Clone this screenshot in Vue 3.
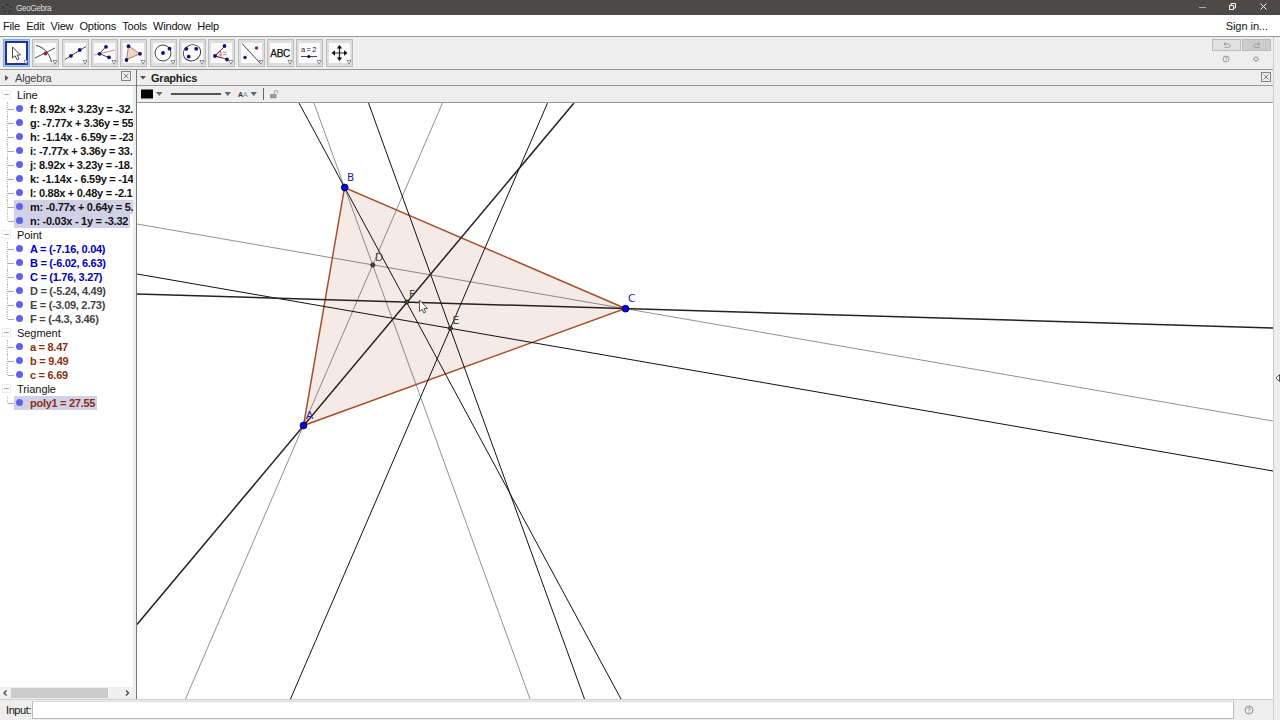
<template>
  <div class="app">
    <div class="titlebar">
      <svg class="logo" width="12" height="12" viewBox="0 0 12 12">
        <ellipse cx="6" cy="6.5" rx="4.5" ry="4" fill="none" stroke="#252538" stroke-width="1" />
        <g fill="#66667c">
          <circle cx="3" cy="3" r=".8" /><circle cx="9" cy="3" r=".8" /><circle cx="10.5" cy="7" r=".8" />
          <circle cx="6" cy="10.5" r=".8" /><circle cx="1.7" cy="8" r=".8" />
        </g>
      </svg>
      <span class="title">GeoGebra</span>
      <svg class="win-buttons" width="80" height="15" viewBox="0 0 80 15" fill="none" stroke="#fff">
        <path d="M-1 7.5H6" stroke="#aaa" />
        <path d="M29.5 5.5h4v4h-4zM31 5V3.5h4.500v4.500H34" />
        <path d="M60.500 3.500l6 6M66.500 3.500l-6 6" />
      </svg>
    </div>

    <div class="menubar">
      <span v-for="m in menus" :key="m" class="menu">{{ m }}</span>
      <span class="signin">Sign in...</span>
    </div>

    <div class="main">
      <div class="content">
        <div class="toolbar">
          <div v-for="(t, i) in tools" :key="t" class="tool" :class="{ active: i === 0 }">
            <svg width="27" height="28" viewBox="0 0 27 28" fill="none" stroke="#333" stroke-width="0.9">
              <rect v-if="i > 0" x="3" y="4" width="21" height="20" fill="#fbfbfb" stroke="none" />
              <path v-if="t === 'move'" d="M9.500 8v11l2.600-2.200 2 4 2-1-2-3.800h3.400z" fill="#fff" />
              <template v-else-if="t === 'point'">
                <path d="M3 19L23 9M4 6.500C11 8 17 13 19.500 23" />
                <circle cx="13.500" cy="14.500" r="1.900" class="red" />
              </template>
              <template v-else-if="t === 'line'">
                <path d="M3 20.500L24 7.500" />
                <circle cx="9" cy="16.800" r="1.900" class="blue" /><circle cx="17.800" cy="11" r="1.900" class="blue" />
              </template>
              <template v-else-if="t === 'bisector'">
                <path d="M15 7.500L8.500 14.800L18 18.500" />
                <path d="M3 16L24 11" stroke="#e77" />
                <circle cx="15" cy="7.800" r="1.900" class="blue" /><circle cx="8.500" cy="14.800" r="1.900" class="blue" />
                <circle cx="18" cy="18.300" r="1.900" class="blue" />
              </template>
              <template v-else-if="t === 'polygon'">
                <path d="M8.500 7L20 14.800L6.500 20.500z" fill="#eed5ca" stroke="#a87060" />
                <circle cx="8.500" cy="7.200" r="1.900" class="blue" /><circle cx="20" cy="14.800" r="1.900" class="blue" />
                <circle cx="6.500" cy="21" r="1.900" class="blue" />
              </template>
              <template v-else-if="t === 'circle'">
                <circle cx="13" cy="14" r="8" />
                <circle cx="13" cy="14" r="1.900" class="blue" /><circle cx="19.500" cy="9.700" r="1.900" class="blue" />
              </template>
              <template v-else-if="t === 'conic'">
                <ellipse cx="13" cy="13.800" rx="9" ry="7.800" transform="rotate(-30 13 13.800)" />
                <circle cx="7.300" cy="9.800" r="1.900" class="blue" /><circle cx="17.200" cy="9.800" r="1.900" class="blue" />
                <circle cx="9.700" cy="17.700" r="1.900" class="blue" />
              </template>
              <template v-else-if="t === 'angle'">
                <path d="M11.500 11.500L7 17l6 2c1-2 1-5-1.500-7.500z" fill="#fbd8d4" stroke="#e99" />
                <path d="M17 7L7 17l13 3.500" />
                <path d="M12.500 12v5M15 13.200h3.500M15 15.500h3.500" stroke="#e66" />
                <circle cx="16.500" cy="7" r="1.900" class="blue" /><circle cx="7" cy="17" r="1.900" class="blue" />
                <circle cx="19" cy="20.500" r="1.900" class="blue" />
              </template>
              <template v-else-if="t === 'reflect'">
                <path d="M4 4.500L22 24" />
                <circle cx="7" cy="18.500" r="1.700" class="blue" /><circle cx="18.500" cy="9" r="1.700" class="red" />
              </template>
              <text v-else-if="t === 'text'" x="3.300" y="17.500" textLength="20" class="abc">ABC</text>
              <template v-else-if="t === 'slider'">
                <text x="5" y="13.300" textLength="15.500" class="slider-label">a = 2</text>
                <path d="M5 17.500H21" />
                <circle cx="12.800" cy="17.500" r="1.500" fill="#111" stroke="none" />
              </template>
              <template v-else>
                <path d="M7 14H20M13.500 7.500V20.500" stroke="#222" stroke-width="1.200" />
                <path d="M5.500 14l3.500-2.700v5.400zM21.500 14l-3.500-2.700v5.400zM13.500 6l-2.700 3.500h5.400zM13.500 22l-2.700-3.500h5.400z" fill="#111" stroke="none" />
              </template>
              <path d="M21 21.500h4l-2 3.700z" fill="#fff" stroke="#777" stroke-width="0.800" />
            </svg>
          </div>
          <div class="tool-right">
            <div class="undo"><svg width="10" height="9" viewBox="0 0 10 9"><path d="M2.500 6.500H6c3 0 3-3.500 0-3.500H2M4 1L2 3l2 2" /></svg></div>
            <div class="undo redo"><svg width="10" height="9" viewBox="0 0 10 9"><path d="M7.500 6.500H4c-3 0-3-3.500 0-3.500H8M6 1l2 2-2 2" /></svg></div>
            <div class="small-icon">
              <svg width="8" height="8" viewBox="0 0 8 8"><circle cx="4" cy="4" r="3" /><path d="M3 3c0-1.400 2.200-1.400 2 0L4 4.200V5M4 5.500V6.200" /></svg>
            </div>
            <div class="small-icon">
              <svg width="8" height="8" viewBox="0 0 8 8"><circle cx="4" cy="4" r="1.900" stroke-width="1.300" /><path d="M4 .800V2M4 6V7.200M.800 4H2M6 4H7.200M1.700 1.700l.8.800M6.300 6.300l-.8-.8M6.300 1.700l-.8.800M1.700 6.300l.8-.8" /></svg>
            </div>
          </div>
        </div>

        <div class="views">
          <div class="algebra">
            <div class="view-header">
              <svg width="7" height="8" viewBox="0 0 7 8"><path d="M2 1l3.500 3L2 7z" fill="#555" /></svg>
              <span class="view-name">Algebra</span>
              <svg class="close" width="10" height="10" viewBox="0 0 10 10"><rect x=".5" y=".5" width="9" height="9" /><path d="M2.500 2.500l5 5M7.500 2.500l-5 5" /></svg>
            </div>
            <div class="tree">
              <template v-for="g in groups" :key="g.name">
                <div class="group"><span class="minus"></span>{{ g.name }}</div>
                <div v-for="(item, i) in g.items" :key="item" class="item" :class="[g.cls, { last: i === g.items.length - 1 }]">
                  <span class="branch"></span>
                  <span class="entry" :class="{ selected: isSelected(item), free: isFree(item) }">
                    <i class="dot"></i><b>{{ item }}</b>
                  </span>
                </div>
              </template>
            </div>
            <div class="scrollbar">
              <svg width="11" height="12" viewBox="0 0 11 12"><path d="M6.500 3.500L4 6l2.500 2.500" /></svg>
              <span class="thumb"></span>
              <svg width="11" height="12" viewBox="0 0 11 12"><path d="M4 3.500L6.500 6 4 8.500" /></svg>
            </div>
          </div>

          <div class="graphics">
            <div class="view-header">
              <svg width="8" height="8" viewBox="0 0 8 8"><path d="M1 2h6L4 5.500z" fill="#555" /></svg>
              <span class="view-name bold">Graphics</span>
              <svg class="close" width="10" height="10" viewBox="0 0 10 10"><rect x=".5" y=".5" width="9" height="9" /><path d="M2.500 2.500l5 5M7.500 2.500l-5 5" /></svg>
            </div>
            <div class="stylebar">
              <svg width="150" height="16" viewBox="137 86 150 16">
                <rect x="141" y="89.500" width="12" height="9" fill="#000" />
                <path d="M156 92h6.500l-3.250 4zM224.500 92h6.500l-3.250 4zM250.500 92h6.500l-3.250 4z" fill="#666" />
                <path d="M171 94H221" stroke="#222" stroke-width="1.700" />
                <text x="238" y="97" font-size="7" font-weight="bold" fill="#333">A</text>
                <text x="243" y="97" font-size="7" fill="#888">A</text>
                <path d="M263.500 88V100" stroke="#666" />
                <rect x="270" y="94" width="6.500" height="4.300" fill="#999" />
                <path d="M274.500 94v-2c0-2 3.300-2 3.300 0v1.500" fill="none" stroke="#aaa" stroke-width="1.100" />
              </svg>
            </div>
            <svg class="canvas" width="1136" height="596" viewBox="137 103 1136 596">
              <polygon points="303.500,425.500 344.500,187.500 625.500,308.500" fill="#993300" fill-opacity="0.1" stroke="#a8502b" stroke-width="1.500" />
              <line v-for="(l, i) in lines" :key="i" :x1="l[0]" :y1="l[1]" :x2="l[2]" :y2="l[3]" :class="l[4]" />
              <g v-for="p in points" :key="p.name" :class="p.free ? 'free-point' : 'dep-point'">
                <circle :cx="p.x" :cy="p.y" :r="p.free ? 3.400 : 2.100" />
                <text :x="p.lx" :y="p.ly">{{ p.name }}</text>
              </g>
              <path d="M419.500 300v11.500l2.600-2.300 1.800 3.800 1.800-.9-1.800-3.600h3.600z" fill="#fff" stroke="#444" stroke-width="0.900" />
            </svg>
          </div>
        </div>

        <div class="inputbar">
          <span class="input-label">Input:</span>
          <div class="input-field"></div>
          <svg class="help" width="10" height="10" viewBox="0 0 10 10" fill="none" stroke="#888" stroke-width=".9"><circle cx="5" cy="5" r="4" /><path d="M3.700 4c0-2 2.800-1.700 2.600 0L5 5.300V6M5 6.800V7.700" /></svg>
        </div>
      </div>

      <div class="side">
        <svg width="7" height="10" viewBox="0 0 7 10"><path d="M5.500 1.500v7L2 5z" fill="#fff" stroke="#555" /></svg>
      </div>
    </div>
  </div>
</template>

<script setup>
const menus = ['File', 'Edit', 'View', 'Options', 'Tools', 'Window', 'Help']

const tools = ['move', 'point', 'line', 'bisector', 'polygon', 'circle', 'conic', 'angle', 'reflect', 'text', 'slider', 'pan']

const groups = [
  {
    name: 'Line',
    cls: 'line-item',
    items: [
      'f: 8.92x + 3.23y = -32.',
      'g: -7.77x + 3.36y = 55',
      'h: -1.14x - 6.59y = -23',
      'i: -7.77x + 3.36y = 33.',
      'j: 8.92x + 3.23y = -18.',
      'k: -1.14x - 6.59y = -14',
      'l: 0.88x + 0.48y = -2.1',
      'm: -0.77x + 0.64y = 5.',
      'n: -0.03x - 1y = -3.32'
    ]
  },
  {
    name: 'Point',
    cls: 'point-item',
    items: ['A = (-7.16, 0.04)', 'B = (-6.02, 6.63)', 'C = (1.76, 3.27)', 'D = (-5.24, 4.49)', 'E = (-3.09, 2.73)', 'F = (-4.3, 3.46)']
  },
  { name: 'Segment', cls: 'segment-item', items: ['a = 8.47', 'b = 9.49', 'c = 6.69'] },
  { name: 'Triangle', cls: 'segment-item', items: ['poly1 = 27.55'] }
]

const selected = ['m', 'n', 'p']
const isSelected = (item) => selected.includes(item[0])
const isFree = (item) => 'ABC'.includes(item[0])

// x1, y1, x2, y2, style
const lines = [
  [442.500, 103, 185.500, 699, 'thin'],
  [314, 103, 530, 699, 'thin'],
  [137, 224, 1273, 421, 'thin'],
  [368.500, 103, 584.500, 699, 'normal'],
  [547.500, 103, 290.500, 699, 'normal'],
  [137, 274, 1273, 471, 'normal'],
  [299, 103, 621, 699, 'normal'],
  [574, 103, 137, 624.500, 'thick'],
  [137, 294, 1273, 328, 'thick']
]

const points = [
  { name: 'A', x: 303.5, y: 425.5, lx: 306, ly: 419, free: true },
  { name: 'B', x: 344.7, y: 187.5, lx: 347, ly: 181, free: true },
  { name: 'C', x: 625.5, y: 308.7, lx: 628, ly: 302, free: true },
  { name: 'D', x: 372.8, y: 265, lx: 375, ly: 261 },
  { name: 'E', x: 450.4, y: 328.3, lx: 452.5, ly: 324 },
  { name: 'F', x: 406.7, y: 302, lx: 409, ly: 298 }
]
</script>

<style>
body { margin: 0; overflow: hidden; }
</style>

<style scoped>
.app {
  width: 1280px;
  height: 720px;
  display: flex;
  flex-direction: column;
  font-family: "Liberation Sans", Arial, sans-serif;
  font-size: 11px;
  color: #222;
  background: #eee;
  overflow: hidden;
}
svg { display: block; flex: none; }
.app * { box-sizing: border-box; }
.titlebar {
  height: 15px;
  flex: none;
  display: flex;
  align-items: center;
  background: #4b4a48;
  color: #ddd;
}
.logo { margin-left: 1px; }
.title { margin-left: 3px; font-size: 8.3px; letter-spacing: -0.45px; line-height: 15px; padding-top: 1px; }
.win-buttons { margin-left: auto; overflow: visible; }
.menubar {
  height: 22px;
  flex: none;
  display: flex;
  align-items: center;
  background: #fff;
  border-bottom: 1px solid #999;
  padding: 1px 12px 0 3px;
  color: #111;
}
.menu { margin-right: 6.2px; letter-spacing: -0.2px; }
.signin { margin-left: auto; letter-spacing: -0.05px; }
.main { flex: 1; display: flex; min-height: 0; }
.content { width: 1273px; display: flex; flex-direction: column; }
.toolbar {
  height: 33px;
  flex: none;
  display: flex;
  gap: 2.35px;
  padding: 2px 2px 0 3px;
  border-bottom: 1px solid #999;
}
.tool { width: 27px; height: 28px; background: #dedede; box-shadow: inset 0 0 0 1px #bbb; }
.tool.active { background: #fff; box-shadow: inset 0 0 0 1px #7aaede, inset 0 0 0 2px #a5c5ea, inset 0 0 0 4px #26309a; }
.blue { fill: #101078; stroke: none; }
.red { fill: #9b2032; stroke: none; }
.abc { font-size: 10px; fill: #111; stroke: #111; stroke-width: 0.25; }
.slider-label { font-size: 7.500px; fill: #222; stroke: none; }
.tool-right {
  margin-left: auto;
  width: 59px;
  display: grid;
  grid-template-columns: 29px 29px;
  grid-template-rows: 12px 14px;
  gap: 0 1px;
}
.tool-right path, .tool-right circle { fill: none; stroke: #999; stroke-width: 0.9; }
.undo { border: 1px solid #bbb; background: #e2e2e2; display: flex; align-items: center; justify-content: center; }
.redo { background: #ccc; }
.small-icon { display: flex; align-items: center; justify-content: center; padding: 2px 2px 0 0; }
.views { flex: 1; display: flex; min-height: 0; }
.algebra { width: 136px; padding-right: 3px; display: flex; flex-direction: column; }
.algebra .view-header { margin-right: -3px; padding-right: 5px; }
.graphics { flex: 1; border-left: 1px solid #777; display: flex; flex-direction: column; }
.view-header {
  height: 16px;
  flex: none;
  display: flex;
  align-items: center;
  padding: 0 4px 0 3px;
  border-bottom: 1px solid #999;
  color: #444;
}
.graphics .view-header { padding: 0 2px 0 2px; }
.view-name { margin-left: 5px; padding-top: 1px; letter-spacing: -0.2px; }
.view-name.bold { font-weight: bold; color: #222; margin-left: 4px; }
.close { margin-left: auto; margin-bottom: 3px; fill: none; stroke: #777; stroke-width: 0.9; }
.graphics .close { margin-bottom: 2px; }
.tree { flex: 1; background: #fff; padding-top: 2px; overflow: hidden; }
.group, .item { height: 14px; line-height: 14px; display: flex; white-space: nowrap; }
.group { color: #111; letter-spacing: -0.05px; }
.minus {
  position: relative;
  width: 9px;
  height: 9px;
  margin: 2px 6px 0 2px;
  border: 1px solid #eee;
}
.minus::after { content: ""; position: absolute; left: 1px; right: 1px; top: 3px; height: 1px; background: #aaa; }
.branch { width: 7px; flex: none; margin-left: 7px; border-left: 1px dotted #bbb; }
.branch::after { content: ""; display: block; height: 7px; border-bottom: 1px dashed #aaa; }
.last .branch { height: 7px; }
.entry { display: flex; align-items: center; padding-right: 2px; }
.dot { width: 7.5px; height: 7.5px; margin: 0 7px 1px 1.5px; border-radius: 50%; background: #6060ec; flex: none; }
.entry b { letter-spacing: -0.28px; color: #111; }
.selected { background: #d0d0e6; }
.point-item b { color: #444; }
.free b { color: #0000b4; }
.segment-item b { color: #8a3010; }
.scrollbar { height: 12px; flex: none; display: flex; background: #f0f0f0; }
.scrollbar path { fill: none; stroke: #444; stroke-width: 1.3; }
.thumb { width: 97px; height: 10px; background: #cbcbcb; margin: 1px 14px 0 0; }
.stylebar { height: 17px; flex: none; border-bottom: 1px solid #999; }
.canvas { background: #fff; }
.thin { stroke: #444; stroke-width: 0.6; }
.normal { stroke: #111; stroke-width: 1; }
.thick { stroke: #222; stroke-width: 1.5; }
.canvas text { font-family: "DejaVu Sans", sans-serif; font-size: 10.5px; }
.free-point circle { fill: #0000e0; stroke: #000040; stroke-width: 0.8; }
.free-point text { fill: #2222aa; }
.dep-point circle { fill: #444; stroke: #111; stroke-width: 0.7; }
.dep-point text { fill: #444; }
.inputbar {
  height: 21px;
  flex: none;
  display: flex;
  align-items: center;
  border-top: 1px solid #ccc;
  padding-left: 6px;
}
.input-label { width: 26px; color: #111; font-size: 11px; letter-spacing: -0.4px; }
.input-field { width: 1202px; height: 18px; background: #fff; border: 1px solid #bbb; border-top-color: #ddd; }
.help { margin-left: 10px; }
.side { width: 7px; border-left: 1px solid #ccc; padding-top: 336px; }
</style>
